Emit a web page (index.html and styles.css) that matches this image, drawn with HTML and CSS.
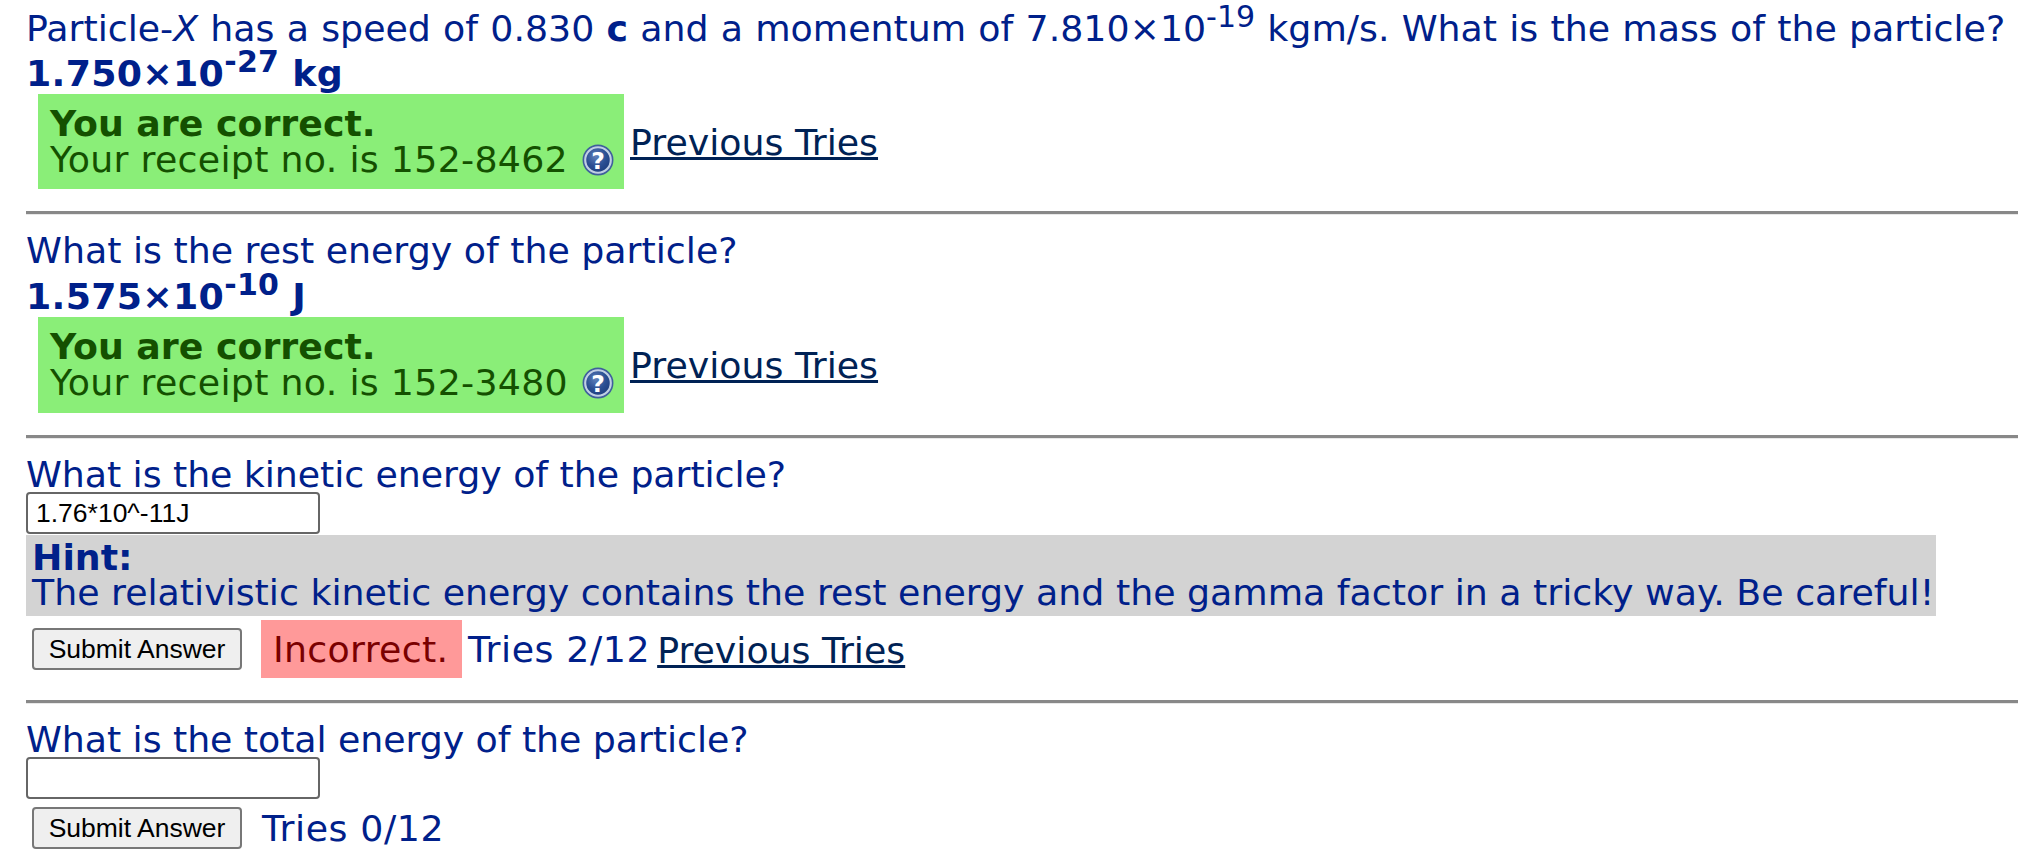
FILE: index.html
```html
<!DOCTYPE html>
<html lang="en">
<head>
  <meta charset="UTF-8">
  <title>Particle-X</title>
  <link rel="stylesheet" href="styles.css">
</head>
<body>
  <!-- mass -->
  <section class="part part-first">
    <div class="question question-long">Particle-<i>X</i> has a speed of 0.830 <b>c</b> and a momentum of 7.810×10<sup>-19</sup> kgm/s. What is the mass of the particle?</div>
    <div class="answer">1.750×10<sup>-27</sup> kg</div>
    <div class="result-row">
      <div class="correct">
        <b>You are correct.</b><br>
        <span class="receipt">Your receipt no. is 152-8462</span>
        <svg class="help" viewBox="0 0 30 30"><use href="#help-icon"></use></svg>
      </div>
      <a href="#" class="tries-link">Previous Tries</a>
    </div>
  </section>
  <hr>

  <!-- rest energy -->
  <section class="part part-rest">
    <div class="question">What is the rest energy of the particle?</div>
    <div class="answer">1.575×10<sup>-10</sup> J</div>
    <div class="result-row">
      <div class="correct">
        <b>You are correct.</b><br>
        <span class="receipt">Your receipt no. is 152-3480</span>
        <svg class="help" viewBox="0 0 30 30"><use href="#help-icon"></use></svg>
      </div>
      <a href="#" class="tries-link">Previous Tries</a>
    </div>
  </section>
  <hr>

  <!-- kinetic energy -->
  <section class="part">
    <div class="question question-tight">What is the kinetic energy of the particle?</div>
    <input class="answer-input" type="text" value="1.76*10^-11J">
    <div class="hint">
      <b class="hint-title">Hint:</b><br>
      The relativistic kinetic energy contains the rest energy and the gamma factor in a tricky way. Be careful!
    </div>
    <div class="submit-row">
      <button class="submit">Submit Answer</button>
      <span class="incorrect">Incorrect.</span>
      <span class="tries">Tries 2/12</span>
      <a href="#" class="tries-link">Previous Tries</a>
    </div>
  </section>
  <hr>

  <!-- total energy -->
  <section class="part">
    <div class="question question-tight">What is the total energy of the particle?</div>
    <input class="answer-input" type="text">
    <div class="submit-row submit-row-last">
      <button class="submit">Submit Answer</button>
      <span class="tries">Tries 0/12</span>
    </div>
  </section>

  <svg width="0" height="0" class="defs">
    <defs>
      <radialGradient id="help-fill" cx="42%" cy="35%" r="65%">
        <stop offset="0" stop-color="#5f82bb"/>
        <stop offset="0.6" stop-color="#2b4f93"/>
        <stop offset="1" stop-color="#1f3f80"/>
      </radialGradient>
      <g id="help-icon">
        <circle cx="15" cy="15" r="14.5" fill="#3f5f9c"/>
        <circle cx="15" cy="15" r="12" fill="url(#help-fill)" stroke="#c0cfe4" stroke-width="2"/>
        <text x="15" y="23" text-anchor="middle" class="help-mark">?</text>
      </g>
    </defs>
  </svg>
</body>
</html>
```

FILE: styles.css
```css
body {
  margin: 0;
  padding: 0 0 0 26px;
  background-color: white;
  color: #00208a;
  font-family: 'DejaVu Sans', Verdana, sans-serif;
  font-size: 36.3px;
  line-height: 36px;
  overflow: hidden;
}

hr {
  margin: 0;
  height: 3px;
  border: none;
  background-color: #888;
  border-bottom: 1px solid #e8e8e8;
}

sup {
  font-size: 30px;
  line-height: 0;
  vertical-align: 14px;
}

.part {
  padding-top: 18px;
  padding-bottom: 22px;
}
.part-first {
  padding-top: 11px;
}
.part-rest {
  padding-bottom: 22px;
}
.part-rest .correct {
  height: 96px;
}

.question {
  line-height: 35px;
}
.question-long {
  word-spacing: 0.7px;
}
.question-tight {
  letter-spacing: -0.06px;
}

.answer {
  margin-top: 10px;
  font-weight: bold;
  letter-spacing: 0.3px;
}
.part-rest .answer {
  margin-top: 11px;
}

.result-row {
  display: flex;
  align-items: center;
  margin-top: 2px;
  padding-left: 12px;
}

.correct {
  width: 586px;
  height: 95px;
  box-sizing: border-box;
  padding: 12px 0 0 12px;
  background-color: #8aee78;
  color: #145000;
}

.receipt {
  letter-spacing: 0.3px;
}

.help {
  width: 32px;
  height: 32px;
  vertical-align: -4px;
  margin-left: 2px;
}
.help-mark {
  fill: white;
  font-size: 22px;
  font-weight: bold;
}
.defs {
  position: absolute;
}

.tries-link {
  color: #002255;
  margin-left: 6px;
  padding-top: 2px;
}
.submit-row .tries-link {
  margin-left: 1px;
  padding-top: 3px;
}

.tries {
  letter-spacing: 0.6px;
  padding-top: 1px;
}

.answer-input {
  display: block;
  width: 294px;
  height: 42px;
  box-sizing: border-box;
  padding: 0 8px;
  border: 2px solid #666;
  border-radius: 4px;
  background: white;
  color: black;
  font-family: 'Liberation Sans', Arial, sans-serif;
  font-size: 26.5px;
}

.hint {
  width: 1910px;
  height: 81px;
  box-sizing: border-box;
  margin-top: 1px;
  padding: 4px 0 0 6px;
  background-color: #d3d3d3;
}
.hint-title {
  position: relative;
  top: 1px;
}

.submit-row {
  display: flex;
  align-items: center;
  gap: 6px;
  margin-top: 4px;
  padding-left: 6px;
}
.submit-row-last {
  margin-top: 8px;
  gap: 20px;
}

.submit {
  width: 210px;
  height: 42px;
  padding: 0;
  margin-right: 13px;
  border: 2px solid #777;
  border-radius: 4px;
  background-color: #efefef;
  color: black;
  font-family: 'Liberation Sans', Arial, sans-serif;
  font-size: 26.5px;
}
.submit-row-last .submit {
  margin-right: 0;
}

.incorrect {
  width: 201px;
  height: 58px;
  box-sizing: border-box;
  padding: 12px 0 0 12px;
  background-color: #ff9999;
  color: #7a0000;
  letter-spacing: 0.3px;
}
```
